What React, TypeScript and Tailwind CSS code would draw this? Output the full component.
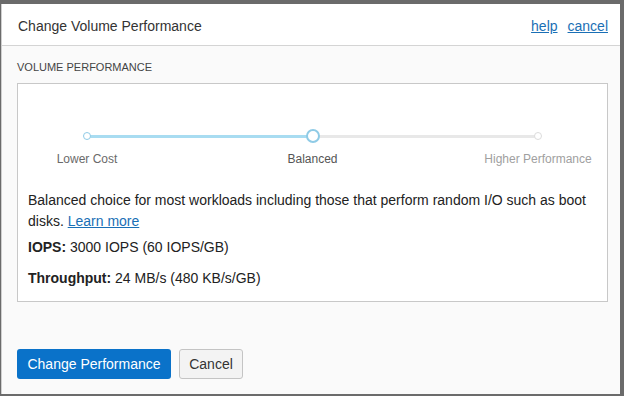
import React from "react";

export default function App() {
  const font = { fontFamily: '"Liberation Sans", Arial, sans-serif' };
  return (
    <div
      className="w-[624px] h-[396px] bg-[#6b6b6b] pt-[4px] pl-[1px] pr-[4px] pb-[2px] overflow-hidden"
      style={font}
    >
      <div className="h-full bg-[#fafafa] flex flex-col border-l border-[#cfcfcf]">
        <div className="h-[42px] shrink-0 bg-white border-b border-[#d4d4d4] flex items-center justify-between pt-[3px] pl-[16px] pr-[12px]">
          <span className="text-[14px] text-[#333333]">Change Volume Performance</span>
          <div className="flex gap-[10px] text-[14px] text-[#1a6fb5]">
            <a className="underline cursor-pointer">help</a>
            <a className="underline cursor-pointer">cancel</a>
          </div>
        </div>
        <div className="flex-1 flex flex-col pl-[15px] pr-[12px]">
          <div className="mt-[15px] text-[11px] leading-[13px] text-[#444444] uppercase">
            Volume Performance
          </div>
          <div className="mt-[9px] h-[219px] border border-[#c8c8c8] bg-white flex flex-col">
            <div className="px-[69px] mt-[46px]">
              <div className="relative h-[12px]">
                <div className="absolute left-0 right-0 top-[5px] h-[3px] bg-[#e8e8e8]" />
                <div className="absolute left-0 w-1/2 top-[5px] h-[3px] bg-[#a8dcf1]" />
                <div className="absolute left-[-4px] top-[2px] w-[8px] h-[8px] rounded-full bg-white border-[1.5px] border-[#8fcbe6]" />
                <div className="absolute left-1/2 -translate-x-1/2 top-[-1px] w-[14px] h-[14px] rounded-full bg-white border-2 border-[#8fcbe6]" />
                <div className="absolute right-[-4px] top-[2px] w-[8px] h-[8px] rounded-full bg-white border-[1.5px] border-[#dcdcdc]" />
              </div>
              <div className="mt-[9px] flex justify-between text-[12px] leading-[16px]">
                <div className="w-0 flex justify-center whitespace-nowrap text-[#6a6a6a]">Lower Cost</div>
                <div className="w-0 flex justify-center whitespace-nowrap text-[#555555]">Balanced</div>
                <div className="w-0 flex justify-center whitespace-nowrap text-[#a0a0a0]">Higher Performance</div>
              </div>
            </div>
            <div className="px-[10px] mt-[23px] text-[14px] leading-[21px] text-[#222222]">
              <p>
                Balanced choice for most workloads including those that perform random I/O such as boot
                disks.{" "}
                <a className="text-[#1a6fb5] underline cursor-pointer">Learn more</a>
              </p>
              <p className="mt-[5px]">
                <span className="font-bold">IOPS:</span> 3000 IOPS (60 IOPS/GB)
              </p>
              <p className="mt-[10px]">
                <span className="font-bold">Throughput:</span> 24 MB/s (480 KB/s/GB)
              </p>
            </div>
          </div>
          <div className="mt-[47px] flex gap-[8px]">
            <button className="w-[154px] h-[30px] rounded-[3px] bg-[#0a72c9] text-white text-[14px]">
              Change Performance
            </button>
            <button className="w-[64px] h-[30px] rounded-[3px] bg-[#f3f3f3] border border-[#c4c4c4] text-[#333333] text-[14px]">
              Cancel
            </button>
          </div>
        </div>
      </div>
    </div>
  );
}
